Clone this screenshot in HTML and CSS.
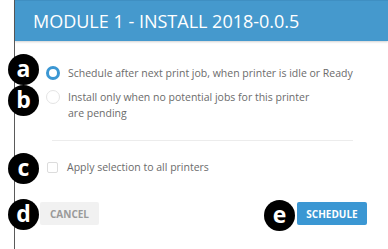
FILE: index.html
```html
<!DOCTYPE html>
<html>
<head>
<meta charset="utf-8">
<link rel="stylesheet" href="styles.css">
</head>
<body>
<div class="modal">
  <div class="header">MODULE 1 - INSTALL 2018-0.0.5</div>
  <div class="content">
    <div class="options">
      <div class="option">
        <span class="radio checked"></span>
        <span class="label">Schedule after next print job, when printer is idle or Ready</span>
      </div>
      <div class="option">
        <span class="radio"></span>
        <span class="label">Install only when no potential jobs for this printer<br>are pending</span>
      </div>
    </div>
    <div class="divider"></div>
    <div class="option check-row">
      <span class="checkbox"></span>
      <span class="label">Apply selection to all printers</span>
    </div>
    <div class="actions">
      <button class="btn cancel">CANCEL</button>
      <button class="btn primary">SCHEDULE</button>
    </div>
  </div>
</div>
<span class="badge badge-a">a</span>
<span class="badge badge-b">b</span>
<span class="badge badge-c">c</span>
<span class="badge badge-d">d</span>
<span class="badge badge-e">e</span>
</body>
</html>
```
FILE: styles.css
```css
html, body {
  margin: 0;
  padding: 0;
  background: #fff;
  font-family: "Open Sans", "Liberation Sans", sans-serif;
}
body {
  position: relative;
  width: 388px;
  height: 249px;
  overflow: hidden;
}
.modal {
  margin-left: 14px;
  border-left: 1px solid #5a5a5a;
  height: 249px;
  background: #fff;
}
.header {
  background: #4599cd;
  border-top: 1px solid #3f8fc2;
  height: 40px;
  line-height: 40px;
  padding-left: 18px;
  color: #fff;
  font-size: 18px;
  box-shadow: 0 1px 2px rgba(0, 0, 0, 0.18);
}
.content {
  padding: 24px 21px 0 31px;
}
.options {
  display: flex;
  flex-direction: column;
  gap: 8px;
}
.option {
  display: flex;
  align-items: flex-start;
  gap: 8px;
}
.label {
  font-size: 10.5px;
  line-height: 16px;
  color: #6b6b6b;
}
.radio {
  width: 14px;
  height: 14px;
  box-sizing: border-box;
  border-radius: 50%;
  border: 1px solid #e4e4e4;
  margin-top: 1px;
  flex: none;
}
.radio.checked {
  border: 3px solid #3b97d3;
}
.divider {
  height: 1px;
  background: #ececec;
  margin: 19px 14px 0 6px;
}
.check-row {
  margin-top: 18px;
  align-items: center;
  gap: 9px;
}
.checkbox {
  width: 11px;
  height: 11px;
  box-sizing: border-box;
  border: 1px solid #dcdcdc;
  border-radius: 2px;
  margin-left: 1px;
}
.actions {
  display: flex;
  justify-content: space-between;
  margin-top: 27px;
  margin-left: -6px;
}
.btn {
  border: none;
  height: 23px;
  padding: 0;
  font-family: "Open Sans", "Liberation Sans", sans-serif;
  font-weight: 700;
  font-size: 10px;
  border-radius: 2px;
}
.cancel {
  width: 59px;
  background: #f1f1f1;
  color: #9a9a9a;
}
.primary {
  width: 70px;
  background: #3b97d3;
  color: #fff;
}
.badge {
  position: absolute;
  width: 31px;
  height: 31px;
  border-radius: 50%;
  background: #000;
  color: #fff;
  font-weight: 700;
  font-size: 23px;
  line-height: 28px;
  text-align: center;
}
.badge-a { left: 8px; top: 54px; }
.badge-b { left: 8px; top: 85px; }
.badge-c { left: 8px; top: 153px; }
.badge-d { left: 8px; top: 199px; }
.badge-e { left: 264px; top: 200px; }
```
